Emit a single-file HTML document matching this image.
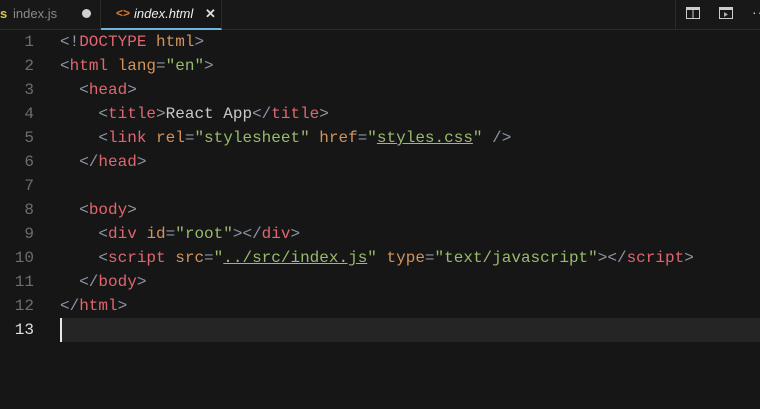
<!DOCTYPE html>
<html><head><style>
body{margin:0;width:760px;height:409px;background:#161616;overflow:hidden;position:relative;font-family:"Liberation Sans",sans-serif}
.tabs{position:absolute;left:0;top:0;width:760px;height:29px;background:#181818;border-bottom:1px solid #2a2a2a}
.tab1{position:absolute;left:0;top:0;width:100px;height:29px;border-right:1px solid #2a2a2a;color:#8a8a8a;font-size:13px;line-height:27px}
.tab2{position:absolute;left:101px;top:0;width:120px;height:28px;background:#161616;border-right:1px solid #2a2a2a;border-bottom:2px solid #6fb5e0;color:#eee;font-size:13px;font-style:italic;line-height:27px}
.code{position:absolute;left:0;top:30px;font-family:"Liberation Mono",monospace;font-size:16px;}
.ln{position:absolute;left:0;width:34px;text-align:right;color:#6e6e6e}
.l{height:24px;line-height:24px;position:relative;white-space:pre}
.t{position:absolute;left:60px;color:#8b95a5}
.r{color:#e06670}.o{color:#d3935c}.g{color:#98bb6c}.p{color:#8b95a5}
.u{text-decoration:underline;text-decoration-color:#98bb6c}
.cur{position:absolute;left:60px;top:318px;width:700px;height:24px;background:#252525}
.caret{position:absolute;left:60px;top:318px;width:2px;height:24px;background:#e8e8e8}
</style></head><body>
<div class="tabs">
<div class="tab1"><span style="color:#d7c84a;font-weight:bold;position:absolute;left:0">s</span><span style="position:absolute;left:13px">index.js</span><span style="position:absolute;left:82px;top:9px;width:9px;height:9px;border-radius:50%;background:#d0d0d0"></span></div>
<div class="tab2"><span style="position:absolute;left:15px;color:#e0782a;font-style:normal;font-size:12px;font-weight:bold">&lt;&gt;</span><span style="position:absolute;left:33px">index.html</span><span style="position:absolute;left:104px;font-style:normal;color:#ddd;font-size:13px;font-weight:bold">✕</span></div>
<div style="position:absolute;left:675px;top:0;width:1px;height:29px;background:#2a2a2a"></div>
<svg style="position:absolute;left:686px;top:7px" width="16" height="13"><rect x="0.5" y="0.5" width="13" height="11" fill="none" stroke="#ccc"/><rect x="0" y="0" width="14" height="3" fill="#ccc"/><line x1="7" y1="0" x2="7" y2="12" stroke="#ccc"/></svg>
<svg style="position:absolute;left:719px;top:7px" width="16" height="13"><rect x="0.5" y="0.5" width="13" height="11" fill="none" stroke="#ccc"/><rect x="0" y="0" width="14" height="3" fill="#ccc"/><path d="M5 5 L9 7.5 L5 10Z" fill="#aaa"/></svg>
<div style="position:absolute;left:752px;top:4px;color:#ccc;font-size:14px;letter-spacing:1px">··</div>
</div>
<div class="cur"></div><div class="caret"></div>
<div class="code" style="width:760px">
<div class="l"><span class="ln">1</span><span class="t">&lt;!<span class="r">DOCTYPE</span> <span class="o">html</span>&gt;</span></div>
<div class="l"><span class="ln">2</span><span class="t">&lt;<span class="r">html</span> <span class="o">lang</span>=<span class="g">"en"</span>&gt;</span></div>
<div class="l"><span class="ln">3</span><span class="t">  &lt;<span class="r">head</span>&gt;</span></div>
<div class="l"><span class="ln">4</span><span class="t">    &lt;<span class="r">title</span>&gt;<span style="color:#c8c8c8">React App</span>&lt;/<span class="r">title</span>&gt;</span></div>
<div class="l"><span class="ln">5</span><span class="t">    &lt;<span class="r">link</span> <span class="o">rel</span>=<span class="g">"stylesheet"</span> <span class="o">href</span>=<span class="g">"<span class="u">styles.css</span>"</span> /&gt;</span></div>
<div class="l"><span class="ln">6</span><span class="t">  &lt;/<span class="r">head</span>&gt;</span></div>
<div class="l"><span class="ln">7</span></div>
<div class="l"><span class="ln">8</span><span class="t">  &lt;<span class="r">body</span>&gt;</span></div>
<div class="l"><span class="ln">9</span><span class="t">    &lt;<span class="r">div</span> <span class="o">id</span>=<span class="g">"root"</span>&gt;&lt;/<span class="r">div</span>&gt;</span></div>
<div class="l"><span class="ln">10</span><span class="t">    &lt;<span class="r">script</span> <span class="o">src</span>=<span class="g">"<span class="u">../src/index.js</span>"</span> <span class="o">type</span>=<span class="g">"text/javascript"</span>&gt;&lt;/<span class="r">script</span>&gt;</span></div>
<div class="l"><span class="ln">11</span><span class="t">  &lt;/<span class="r">body</span>&gt;</span></div>
<div class="l"><span class="ln">12</span><span class="t">&lt;/<span class="r">html</span>&gt;</span></div>
<div class="l"><span class="ln" style="color:#e0e0e0">13</span></div>
</div>
</body></html>
